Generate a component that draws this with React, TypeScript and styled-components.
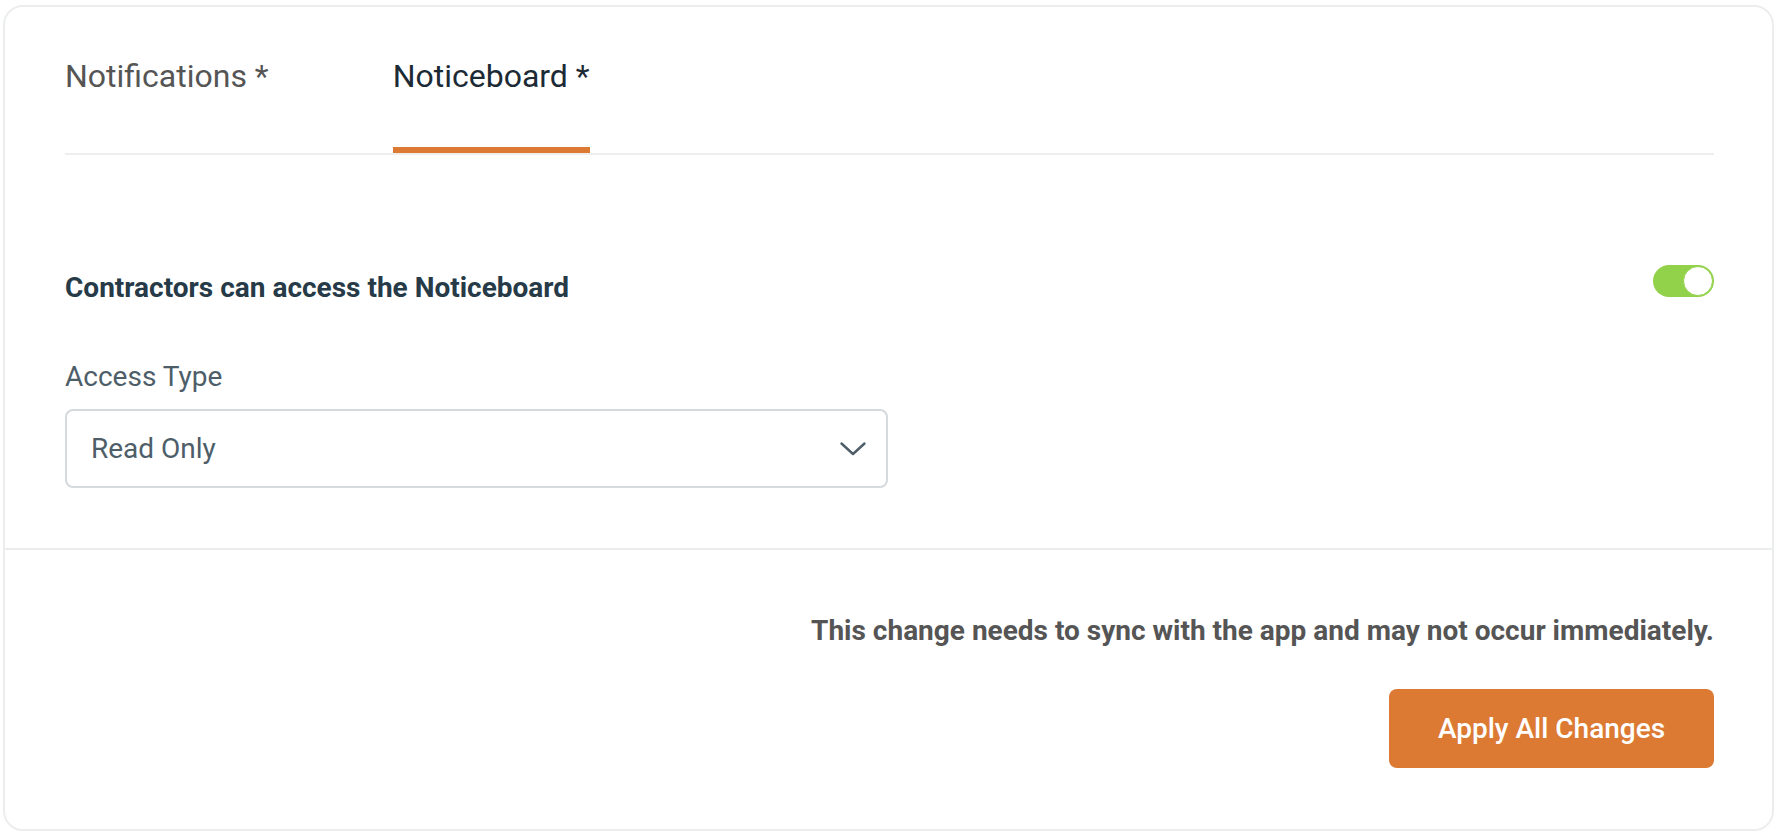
import styled, { createGlobalStyle } from 'styled-components'
import { useState } from 'react'

const GlobalStyle = createGlobalStyle`
  * {
    box-sizing: border-box;
  }
  body {
    margin: 0;
    background: #ffffff;
    font-family: Roboto, "Liberation Sans", Arial, sans-serif;
  }
`

const colors = {
  orange: '#dc7a33',
  green: '#92d24b',
  heading: '#263a47',
  slate: '#4e5e69',
  grey: '#555555',
  line: '#eceeee',
}

export const Page = styled.div`
  padding: 5px 8px 7px 3px;
`

export const Card = styled.div`
  height: 826px;
  border: 2px solid ${colors.line};
  border-radius: 20px;
  display: flex;
  flex-direction: column;
  overflow: hidden;
`

export const Body = styled.div`
  padding: 0 58px 60px 60px;
  border-bottom: 2px solid ${colors.line};
`

export const Tabs = styled.div`
  display: flex;
  gap: 124px;
  padding-top: 50px;
  border-bottom: 2px solid #eeeeee;
`

export const Tab = styled.div<{ $active?: boolean }>`
  font-size: 32px;
  line-height: 38px;
  padding-bottom: 52px;
  color: ${({ $active }) => ($active ? '#1c2a35' : colors.grey)};
  border-bottom: 6px solid ${({ $active }) => ($active ? colors.orange : 'transparent')};
  cursor: pointer;
`

export const SettingRow = styled.div`
  display: flex;
  align-items: center;
  justify-content: space-between;
  margin-top: 102px;
`

export const SettingTitle = styled.div`
  font-size: 28px;
  line-height: 32px;
  font-weight: 700;
  color: ${colors.heading};
  padding-top: 15px;
`

export const Switch = styled.button<{ $on: boolean }>`
  width: 61px;
  height: 32px;
  border: none;
  padding: 1px;
  border-radius: 16px;
  background: ${({ $on }) => ($on ? colors.green : '#cfd6da')};
  display: flex;
  justify-content: ${({ $on }) => ($on ? 'flex-end' : 'flex-start')};
  cursor: pointer;

  span {
    width: 30px;
    height: 30px;
    border-radius: 50%;
    background: #fff;
    border: 1.5px solid ${({ $on }) => ($on ? colors.green : '#cfd6da')};
  }
`

export const FieldLabel = styled.div`
  margin-top: 56px;
  font-size: 28px;
  line-height: 33px;
  color: ${colors.slate};
`

export const Select = styled.div`
  margin-top: 16px;
  width: 823px;
  height: 79px;
  border: 2px solid #d5dadd;
  border-radius: 8px;
  display: flex;
  align-items: center;
  justify-content: space-between;
  padding: 0 20px 0 24px;
  font-size: 28px;
  color: ${colors.slate};
  cursor: pointer;
`

export const Footer = styled.div`
  flex: 1;
  display: flex;
  flex-direction: column;
  align-items: flex-end;
  padding: 64px 58px 0 60px;
`

export const Notice = styled.p`
  margin: 0;
  font-size: 28px;
  line-height: 33px;
  font-weight: 700;
  color: ${colors.grey};
`

export const ApplyButton = styled.button`
  margin-top: 42px;
  width: 325px;
  height: 79px;
  border: none;
  border-radius: 8px;
  background: ${colors.orange};
  color: #fff;
  font-family: inherit;
  font-size: 28px;
  font-weight: 500;
  cursor: pointer;
`

const Chevron = () => (
  <svg width="26" height="14" viewBox="0 0 26 14" fill="none">
    <path d="M1.5 1.5 L13 12 L24.5 1.5" stroke={colors.slate} strokeWidth="2.4" strokeLinecap="round" strokeLinejoin="round" />
  </svg>
)

export default function App() {
  const [tab, setTab] = useState('noticeboard')
  const [enabled, setEnabled] = useState(true)

  return (
    <>
      <GlobalStyle />
      <Page>
        <Card>
          <Body>
            <Tabs>
              <Tab $active={tab === 'notifications'} onClick={() => setTab('notifications')}>
                Notifications *
              </Tab>
              <Tab $active={tab === 'noticeboard'} onClick={() => setTab('noticeboard')}>
                Noticeboard *
              </Tab>
            </Tabs>

            <SettingRow>
              <SettingTitle>Contractors can access the Noticeboard</SettingTitle>
              <Switch $on={enabled} onClick={() => setEnabled(!enabled)}>
                <span />
              </Switch>
            </SettingRow>

            <FieldLabel>Access Type</FieldLabel>
            <Select>
              Read Only
              <Chevron />
            </Select>
          </Body>

          <Footer>
            <Notice>This change needs to sync with the app and may not occur immediately.</Notice>
            <ApplyButton>Apply All Changes</ApplyButton>
          </Footer>
        </Card>
      </Page>
    </>
  )
}
